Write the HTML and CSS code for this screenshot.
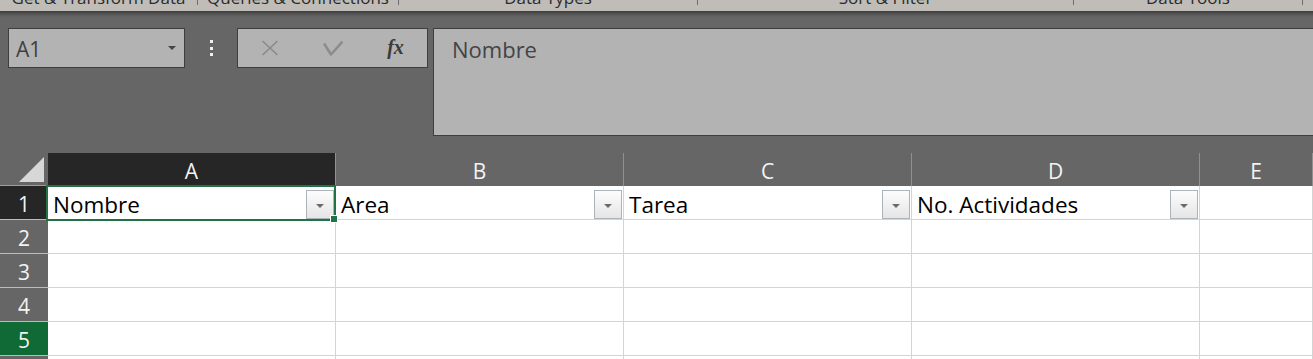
FILE: index.html
```html
<!DOCTYPE html>
<html lang="es">
<head>
<meta charset="utf-8">
<title>Excel</title>
<link rel="stylesheet" href="styles.css">
</head>
<body>
<div class="app">
  <div class="ribbon">
    <div class="grp g1"><span class="lbl">Get &amp; Transform Data</span><i class="tick"></i></div>
    <div class="grp g2"><span class="lbl">Queries &amp; Connections</span><i class="tick"></i></div>
    <div class="grp g3"><span class="lbl">Data Types</span><i class="tick"></i></div>
    <div class="grp g4"><span class="lbl">Sort &amp; Filter</span><i class="tick"></i></div>
    <div class="grp g5"><span class="lbl">Data Tools</span><i class="tick"></i></div>
  </div>
  <div class="shade"></div>
  <div class="fbar">
    <div class="namebox">
      <span class="ref">A1</span>
      <svg class="caret" width="8" height="4" viewBox="0 0 8 4"><polygon points="0,0 8,0 4,4" fill="#444"/></svg>
    </div>
    <div class="dots"><i></i><i></i><i></i></div>
    <div class="btns">
      <div class="slot">
        <svg width="18" height="16" viewBox="0 0 18 16"><path d="M1.5 1 L16.5 15 M16.5 1 L1.5 15" stroke="#8a8a8a" stroke-width="1.6" fill="none"/></svg>
      </div>
      <div class="slot">
        <svg width="20" height="17" viewBox="0 0 20 17"><path d="M1 3.5 L8 14.5 L19.5 1.5" stroke="#8c8c8c" stroke-width="2.6" fill="none" stroke-linejoin="round"/></svg>
      </div>
      <div class="slot"><span class="fx">fx</span></div>
    </div>
    <div class="formula">Nombre</div>
  </div>
  <div class="sheet">
    <div class="hrow">
      <div class="corner">
        <svg width="27" height="27" viewBox="0 0 27 27"><polygon points="26,1 26,26 1,26" fill="#d7d7d7"/></svg>
      </div>
      <div class="ch sel-col">A</div>
      <div class="ch">B</div>
      <div class="ch">C</div>
      <div class="ch">D</div>
      <div class="ch e">E</div>
    </div>
    <div class="row">
      <div class="rh dark">1</div>
      <div class="cell"><span class="txt">Nombre</span><span class="fbtn"><i></i></span></div>
      <div class="cell"><span class="txt">Area</span><span class="fbtn"><i></i></span></div>
      <div class="cell"><span class="txt">Tarea</span><span class="fbtn"><i></i></span></div>
      <div class="cell"><span class="txt">No. Actividades</span><span class="fbtn"><i></i></span></div>
      <div class="cell e"></div>
    </div>
    <div class="row">
      <div class="rh">2</div>
      <div class="cell"></div><div class="cell"></div><div class="cell"></div><div class="cell"></div><div class="cell e"></div>
    </div>
    <div class="row">
      <div class="rh">3</div>
      <div class="cell"></div><div class="cell"></div><div class="cell"></div><div class="cell"></div><div class="cell e"></div>
    </div>
    <div class="row">
      <div class="rh">4</div>
      <div class="cell"></div><div class="cell"></div><div class="cell"></div><div class="cell"></div><div class="cell e"></div>
    </div>
    <div class="row">
      <div class="rh green">5</div>
      <div class="cell"></div><div class="cell"></div><div class="cell"></div><div class="cell"></div><div class="cell e"></div>
    </div>
    <div class="row">
      <div class="rh">6</div>
      <div class="cell"></div><div class="cell"></div><div class="cell"></div><div class="cell"></div><div class="cell e"></div>
    </div>
    <div class="selection"><i class="handle"></i></div>
  </div>
</div>
</body>
</html>
```
FILE: styles.css
```css
html, body {
  margin: 0;
  padding: 0;
}
body {
  background: #666666;
  width: 1313px;
  height: 359px;
  overflow: hidden;
  font-family: "Open Sans", "Noto Sans", sans-serif;
}
.app {
  width: 1313px;
  height: 359px;
  overflow: hidden;
}

/* ribbon strip */
.ribbon {
  height: 11px;
  background: #c0bdb9;
  display: flex;
  overflow: hidden;
}
.grp {
  display: flex;
  align-items: flex-start;
}
.g1 { width: 198px; }
.g2 { width: 201px; }
.g3 { width: 299px; }
.g4 { width: 376px; }
.g5 { width: 229px; }
.lbl {
  flex: 1;
  text-align: center;
  font-size: 17px;
  line-height: 17px;
  margin-top: -11px;
  color: #2b2b2b;
  white-space: nowrap;
}
.tick {
  width: 1px;
  height: 5px;
  background: #6e6e6e;
}
.shade {
  height: 6px;
  background: linear-gradient(#3b3b3b, #545454 50%, #666666);
}

/* formula bar */
.fbar {
  display: flex;
  align-items: flex-start;
  padding: 11px 0 0 8px;
  height: 119px;
  box-sizing: border-box;
  margin-bottom: 17px;
}
.namebox {
  width: 177px;
  height: 40px;
  box-sizing: border-box;
  border: 1px solid #3e3e3e;
  background: #b3b3b3;
  display: flex;
  align-items: center;
  justify-content: space-between;
  padding: 2px 8px 0 7px;
}
.ref {
  font-size: 21px;
  color: #404040;
}
.caret {
  margin-top: -2px;
}
.dots {
  width: 52px;
  height: 40px;
  display: flex;
  flex-direction: column;
  align-items: center;
  justify-content: center;
  gap: 3.5px;
}
.dots i {
  width: 3px;
  height: 3px;
  background: #f0f0f0;
}
.btns {
  width: 191px;
  height: 40px;
  box-sizing: border-box;
  border: 1px solid #3e3e3e;
  background: #b3b3b3;
  display: flex;
}
.slot {
  width: 63px;
  display: flex;
  align-items: center;
  justify-content: center;
}
.fx {
  font-family: "Liberation Serif", "DejaVu Serif", serif;
  font-style: italic;
  font-weight: bold;
  font-size: 20px;
  color: #3b3b3b;
  margin-top: -2px;
}
.formula {
  flex: 1;
  margin-left: 5px;
  margin-right: -3px;
  height: 108px;
  box-sizing: border-box;
  border: 1px solid #3e3e3e;
  background: #b3b3b3;
  padding: 5px 0 0 18px;
  font-size: 22px;
  line-height: 30px;
  color: #444444;
}

/* sheet */
.sheet {
  position: relative;
}
.hrow {
  display: flex;
  height: 33px;
}
.corner {
  width: 48px;
  box-sizing: border-box;
  border-bottom: 1px solid #9c9c9c;
  display: flex;
  align-items: flex-end;
  justify-content: flex-end;
  padding: 0 3px 2px 0;
}
.ch {
  width: 288px;
  box-sizing: border-box;
  border-right: 1px solid #909090;
  display: flex;
  align-items: center;
  justify-content: center;
  color: #f3f3f3;
  font-size: 21px;
  padding-top: 2px;
}
.ch.sel-col {
  background: #262626;
}
.ch.e, .cell.e {
  width: 113px;
}
.row {
  display: flex;
  height: 34px;
}
.rh {
  width: 48px;
  box-sizing: border-box;
  border-bottom: 1px solid #bdbdbd;
  display: flex;
  align-items: center;
  justify-content: center;
  color: #f3f3f3;
  font-size: 21px;
  padding-top: 2px;
}
.rh.dark {
  background: #262626;
}
.rh.green {
  background: #0f6a36;
}
.cell {
  width: 288px;
  box-sizing: border-box;
  background: #ffffff;
  border-right: 1px solid #d4d4d4;
  border-bottom: 1px solid #d4d4d4;
  display: flex;
  justify-content: space-between;
}
.txt {
  align-self: center;
  padding: 3px 0 0 5px;
  font-size: 22.5px;
  color: #000000;
  white-space: nowrap;
}
.fbtn {
  align-self: flex-end;
  width: 28px;
  height: 29px;
  margin-right: 1px;
  box-sizing: border-box;
  border: 1px solid #abb3bb;
  background: linear-gradient(#fdfdfd, #e5e5e5);
  display: flex;
  align-items: center;
  justify-content: center;
}
.fbtn i {
  width: 0;
  height: 0;
  border-left: 4px solid transparent;
  border-right: 4px solid transparent;
  border-top: 4px solid #6a6a6a;
  margin-top: 3px;
}
.selection {
  position: absolute;
  left: 46px;
  top: 32px;
  width: 290px;
  height: 36px;
  box-sizing: border-box;
  border: 2px solid #217346;
}
.handle {
  position: absolute;
  right: -4px;
  bottom: -4px;
  width: 6px;
  height: 6px;
  background: #217346;
  border: 1px solid #ffffff;
}
```
